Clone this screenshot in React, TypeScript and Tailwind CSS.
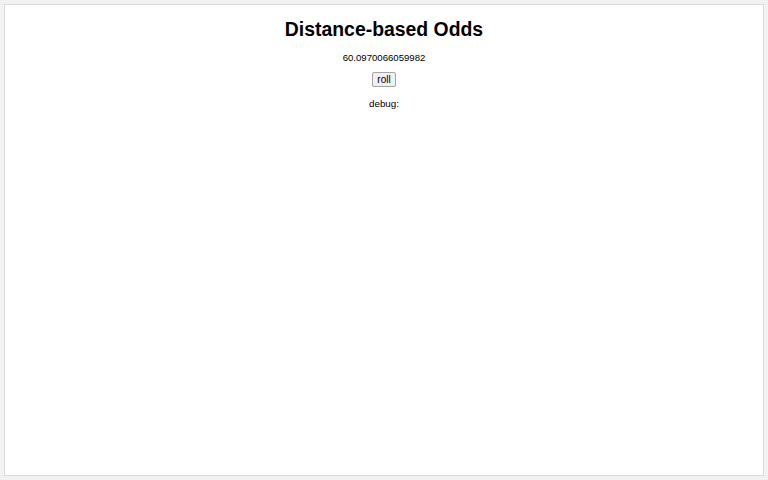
export default function App() {
  return (
    <div className="h-[480px] w-[768px] bg-[#f2f2f2] p-1 font-['Liberation_Sans',Arial,sans-serif]">
      <div className="flex h-full flex-col items-center border border-[#dadada] bg-white text-black">
        <h1 className="mt-[13px] text-[19.4px] font-bold leading-[22px]">Distance-based Odds</h1>
        <p className="mt-[12px] text-[9.6px] leading-[11px]">60.0970066059982</p>
        <button className="mt-[9px] flex h-[15px] w-[24px] items-center justify-center rounded-[2px] border border-[#a3a3a3] bg-[#f0f0f0] text-[10px] leading-[11px]">
          roll
        </button>
        <p className="mt-[11px] text-[9.8px] leading-[11px]">debug:</p>
      </div>
    </div>
  );
}
